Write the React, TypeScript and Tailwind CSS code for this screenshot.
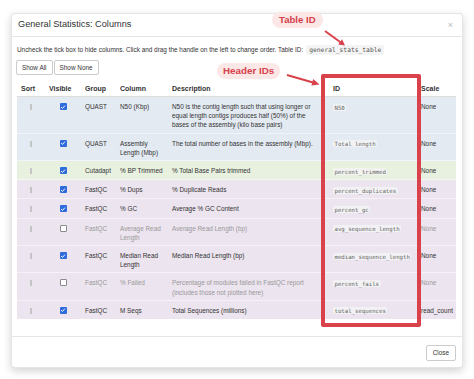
import React from 'react';

type Row = {
  group: string;
  column: string;
  description: string;
  id: string;
  scale: string;
  visible: boolean;
  tone: 'blue' | 'green' | 'purple';
};

const rows: Row[] = [
  {
    group: 'QUAST',
    column: 'N50 (Kbp)',
    description:
      'N50 is the contig length such that using longer or equal length contigs produces half (50%) of the bases of the assembly (kilo base pairs)',
    id: 'N50',
    scale: 'None',
    visible: true,
    tone: 'blue',
  },
  {
    group: 'QUAST',
    column: 'Assembly Length (Mbp)',
    description: 'The total number of bases in the assembly (Mbp).',
    id: 'Total length',
    scale: 'None',
    visible: true,
    tone: 'blue',
  },
  {
    group: 'Cutadapt',
    column: '% BP Trimmed',
    description: '% Total Base Pairs trimmed',
    id: 'percent_trimmed',
    scale: 'None',
    visible: true,
    tone: 'green',
  },
  {
    group: 'FastQC',
    column: '% Dups',
    description: '% Duplicate Reads',
    id: 'percent_duplicates',
    scale: 'None',
    visible: true,
    tone: 'purple',
  },
  {
    group: 'FastQC',
    column: '% GC',
    description: 'Average % GC Content',
    id: 'percent_gc',
    scale: 'None',
    visible: true,
    tone: 'purple',
  },
  {
    group: 'FastQC',
    column: 'Average Read Length',
    description: 'Average Read Length (bp)',
    id: 'avg_sequence_length',
    scale: 'None',
    visible: false,
    tone: 'purple',
  },
  {
    group: 'FastQC',
    column: 'Median Read Length',
    description: 'Median Read Length (bp)',
    id: 'median_sequence_length',
    scale: 'None',
    visible: true,
    tone: 'purple',
  },
  {
    group: 'FastQC',
    column: '% Failed',
    description: 'Percentage of modules failed in FastQC report (includes those not plotted here)',
    id: 'percent_fails',
    scale: 'None',
    visible: false,
    tone: 'purple',
  },
  {
    group: 'FastQC',
    column: 'M Seqs',
    description: 'Total Sequences (millions)',
    id: 'total_sequences',
    scale: 'read_count',
    visible: true,
    tone: 'purple',
  },
];

const toneBg = {
  blue: 'bg-[#e3eaf2]',
  green: 'bg-[#e8f1e0]',
  purple: 'bg-[#ece4ef]',
};

const Checkbox = ({ checked }: { checked: boolean }) =>
  checked ? (
    <span className="inline-flex w-[7px] h-[7px] rounded-[1px] bg-[#2f6bdc] items-center justify-center">
      <svg viewBox="0 0 8 8" className="w-[6px] h-[6px]">
        <path d="M1.5 4.2 L3.3 5.9 L6.6 2.2" fill="none" stroke="#fff" strokeWidth="1.3" />
      </svg>
    </span>
  ) : (
    <span className="inline-block w-[7px] h-[7px] rounded-[1px] bg-white border border-[#8a8a8a]" />
  );

const cell = 'align-top pl-[4px] pt-[5px] pb-[3px] leading-[9.2px]';

export default function App() {
  return (
    <div
      className="relative w-[474px] h-[379px] bg-white pt-[13px] px-[11px] text-[#333]"
      style={{ fontFamily: '"Liberation Sans", Arial, sans-serif' }}
    >
      <div className="flex flex-col w-[452px] h-[355px] bg-white rounded-[4px] border border-black/10 shadow-[0_3px_9px_rgba(0,0,0,0.18)]">
        <div className="flex items-center justify-between h-[23px] px-[6px] border-b border-[#e5e5e5]">
          <span className="text-[9.2px] leading-none">General Statistics: Columns</span>
          <span className="text-[9px] leading-none text-[#bbb] mr-[3px]">×</span>
        </div>

        <div className="grow px-[5px] pt-[8px]">
          <div className="flex items-center h-[10px] text-[6.4px] whitespace-nowrap">
            <span>
              Uncheck the tick box to hide columns. Click and drag the handle on the left to change order. Table ID:
            </span>
            <code
              className="ml-[3px] px-[3px] py-[1px] rounded-[2px] bg-[#f4f4f4] text-[#555] text-[6.3px] leading-[8px]"
              style={{ fontFamily: '"DejaVu Sans Mono", "Liberation Mono", monospace' }}
            >
              general_stats_table
            </code>
          </div>

          <div className="flex gap-[1px] mt-[5px] -ml-[1px]">
            <button className="h-[15px] px-[5px] border border-[#ccc] rounded-[2px] bg-white text-[6.4px]">Show All</button>
            <button className="h-[15px] px-[5px] border border-[#ccc] rounded-[2px] bg-white text-[6.4px]">Show None</button>
          </div>

          <table className="mt-[5px] w-[439px] table-fixed border-collapse text-[6.4px]">
            <colgroup>
              <col className="w-[28px]" />
              <col className="w-[36px]" />
              <col className="w-[35px]" />
              <col className="w-[52px]" />
              <col className="w-[161px]" />
              <col className="w-[88px]" />
              <col className="w-[39px]" />
            </colgroup>
            <thead>
              <tr className="border-b border-[#ddd] text-[7px] font-bold">
                <th className="text-left pl-[4px] pt-[4px] pb-[3px] leading-[9px]">Sort</th>
                <th className="text-left pl-[4px] pt-[4px] pb-[3px] leading-[9px]">Visible</th>
                <th className="text-left pl-[4px] pt-[4px] pb-[3px] leading-[9px]">Group</th>
                <th className="text-left pl-[4px] pt-[4px] pb-[3px] leading-[9px]">Column</th>
                <th className="text-left pl-[4px] pt-[4px] pb-[3px] leading-[9px]">Description</th>
                <th className="text-left pl-[4px] pt-[4px] pb-[3px] leading-[9px]">ID</th>
                <th className="text-left pl-[4px] pt-[4px] pb-[3px] leading-[9px]">Scale</th>
              </tr>
            </thead>
            <tbody>
              {rows.map((row) => (
                <tr
                  key={row.id}
                  className={`${toneBg[row.tone]} border-t border-white/50 ${row.visible ? 'text-[#333]' : 'text-[#999]'}`}
                >
                  <td className="align-top pt-[6px] text-center">
                    <span className="inline-block w-[2px] h-[6px] bg-[#c4c4c4]" />
                  </td>
                  <td className="align-top pt-[6px] text-center leading-none">
                    <Checkbox checked={row.visible} />
                  </td>
                  <td className={cell}>{row.group}</td>
                  <td className={`${cell} pr-[2px]`}>{row.column}</td>
                  <td className={`${cell} pr-[9px]`}>{row.description}</td>
                  <td className={cell}>
                    <code
                      className="px-[1.5px] py-[0.5px] rounded-[2px] bg-[#f4f4f4]/80 text-[#666] text-[5.7px] whitespace-nowrap"
                      style={{ fontFamily: '"DejaVu Sans Mono", "Liberation Mono", monospace' }}
                    >
                      {row.id}
                    </code>
                  </td>
                  <td className={`${cell} whitespace-nowrap`}>{row.scale}</td>
                </tr>
              ))}
            </tbody>
          </table>
        </div>

        <div className="flex justify-end h-[31px] pt-[8px] pr-[6px] border-t border-[#e5e5e5]">
          <button className="h-[16px] px-[6px] border border-[#ccc] rounded-[2px] bg-white text-[6.4px]">Close</button>
        </div>
      </div>

      {/* annotations */}
      <div className="absolute left-[321px] top-[74px] w-[100px] h-[253px] border-[4px] border-[#d9424a] rounded-[2px]" />

      <div className="absolute left-[272px] top-[12px] h-[16px] px-[7px] flex items-center rounded-[8px] bg-[#fce7e7] text-[#d6404a] font-bold text-[9.6px]">
        Table ID
      </div>
      <div className="absolute left-[217px] top-[63px] h-[16px] px-[6px] flex items-center rounded-[8px] bg-[#fce7e7] text-[#d6404a] font-bold text-[9.8px]">
        Header IDs
      </div>

      <svg className="absolute left-0 top-0 pointer-events-none" width="474" height="379">
        <line x1="325" y1="31" x2="340.5" y2="42.2" stroke="#d9424a" strokeWidth="2" />
        <polygon points="345,45.5 338.2,44.6 342.1,39.2" fill="#d9424a" />
        <line x1="287" y1="75" x2="313" y2="82.5" stroke="#d9424a" strokeWidth="2" />
        <polygon points="319.5,84.4 311.4,85.6 313.2,79.1" fill="#d9424a" />
      </svg>
    </div>
  );
}
